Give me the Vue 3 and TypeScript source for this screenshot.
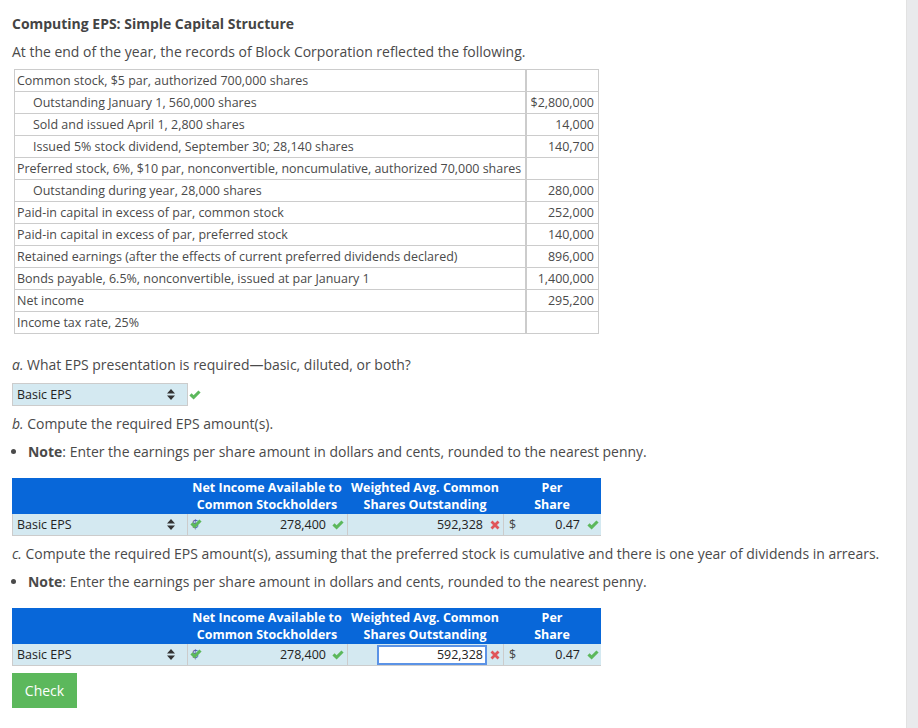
<script setup lang="ts">
interface LedgerRow {
  label: string;
  amount?: string;
  indent?: boolean;
}

const ledger: LedgerRow[] = [
  { label: 'Common stock, $5 par, authorized 700,000 shares' },
  { label: 'Outstanding January 1, 560,000 shares', amount: '$2,800,000', indent: true },
  { label: 'Sold and issued April 1, 2,800 shares', amount: '14,000', indent: true },
  { label: 'Issued 5% stock dividend, September 30; 28,140 shares', amount: '140,700', indent: true },
  { label: 'Preferred stock, 6%, $10 par, nonconvertible, noncumulative, authorized 70,000 shares' },
  { label: 'Outstanding during year, 28,000 shares', amount: '280,000', indent: true },
  { label: 'Paid-in capital in excess of par, common stock', amount: '252,000' },
  { label: 'Paid-in capital in excess of par, preferred stock', amount: '140,000' },
  { label: 'Retained earnings (after the effects of current preferred dividends declared)', amount: '896,000' },
  { label: 'Bonds payable, 6.5%, nonconvertible, issued at par January 1', amount: '1,400,000' },
  { label: 'Net income', amount: '295,200' },
  { label: 'Income tax rate, 25%' },
];

const answerTables = [{ focused: false }, { focused: true }];
</script>

<template>
  <div class="page">
    <main class="content">
      <h1 class="title">Computing EPS: Simple Capital Structure</h1>
      <p class="intro">At the end of the year, the records of Block Corporation reflected the following.</p>

      <table class="ledger">
        <tbody>
          <tr v-for="row in ledger" :key="row.label">
            <td class="ledger-label" :class="{ indent: row.indent }">{{ row.label }}</td>
            <td class="ledger-amount">{{ row.amount }}</td>
          </tr>
        </tbody>
      </table>

      <p class="question q-a"><em>a.</em> What EPS presentation is required—basic, diluted, or both?</p>
      <div class="select-line">
        <div class="select-box">
          <span>Basic EPS</span>
          <svg class="updown" viewBox="0 0 8 11"><path d="M4 0 8 4.4H0ZM4 11 0 6.6h8Z" /></svg>
        </div>
        <svg class="tick" viewBox="0 0 12 10"><path d="M.4 5.4 2.6 3.2 4.6 5.2 9.4.4 11.6 2.6 4.6 9.6Z" /></svg>
      </div>

      <p class="question q-b"><em>b.</em> Compute the required EPS amount(s).</p>
      <ul class="note"><li><strong>Note</strong>: Enter the earnings per share amount in dollars and cents, rounded to the nearest penny.</li></ul>

      <template v-for="(t, i) in answerTables" :key="i">
        <p v-if="i === 1" class="question q-c"><em>c.</em> Compute the required EPS amount(s), assuming that the preferred stock is cumulative and there is one year of dividends in arrears.</p>
        <ul v-if="i === 1" class="note"><li><strong>Note</strong>: Enter the earnings per share amount in dollars and cents, rounded to the nearest penny.</li></ul>

        <div class="answer">
          <div class="head">
            <div></div>
            <div>Net Income Available to<br />Common Stockholders</div>
            <div>Weighted Avg. Common<br />Shares Outstanding</div>
            <div>Per<br />Share</div>
          </div>
          <div class="row">
            <div class="cell cell-select">
              <span>Basic EPS</span>
              <svg class="updown" viewBox="0 0 8 11"><path d="M4 0 8 4.4H0ZM4 11 0 6.6h8Z" /></svg>
            </div>
            <div class="cell cell-income">
              <span class="dollar-tick">
                <span class="dollar-back">$</span>
                <svg class="tick overlay" viewBox="0 0 12 10"><path d="M.4 5.4 2.6 3.2 4.6 5.2 9.4.4 11.6 2.6 4.6 9.6Z" /></svg>
              </span>
              <span class="num">278,400</span>
              <svg class="tick" viewBox="0 0 12 10"><path d="M.4 5.4 2.6 3.2 4.6 5.2 9.4.4 11.6 2.6 4.6 9.6Z" /></svg>
            </div>
            <div class="cell cell-shares">
              <span class="num" :class="{ focused: t.focused }">592,328</span>
              <svg class="cross" viewBox="0 0 10 10"><path d="M1.5 1.5 8.5 8.5M8.5 1.5 1.5 8.5" /></svg>
            </div>
            <div class="cell cell-per">
              <span class="dollar">$</span>
              <span class="num">0.47</span>
              <svg class="tick" viewBox="0 0 12 10"><path d="M.4 5.4 2.6 3.2 4.6 5.2 9.4.4 11.6 2.6 4.6 9.6Z" /></svg>
            </div>
          </div>
        </div>
      </template>

      <button class="check" type="button">Check</button>
    </main>
    <div class="scrollbar"></div>
  </div>
</template>

<style>
html,
body {
  margin: 0;
  background: #fff;
  overflow: hidden;
}
</style>

<style scoped>
.page {
  display: flex;
  width: 918px;
  height: 728px;
  overflow: hidden;
  font-family: "Open Sans", "Liberation Sans", sans-serif;
  color: #4a4a4a;
}

.content {
  flex: 1;
  min-width: 0;
  padding: 14px 0 0 12px;
}

.scrollbar {
  width: 11px;
  border-left: 1px solid #e2e2e2;
  background: #e9eaec;
}

.title {
  margin: 0;
  font-size: 13.98px;
  line-height: 19px;
  font-weight: 700;
  color: #444;
}

.intro {
  margin: 9px 0 7px;
  font-size: 13.98px;
  line-height: 20px;
}

.ledger {
  margin-left: 2px;
  border-collapse: collapse;
  table-layout: fixed;
  width: 585px;
  font-size: 12.48px;
}

.ledger td {
  height: 22px;
  padding: 0 4px 0 3px;
  border: 1px solid #ccc;
  line-height: 17px;
  white-space: nowrap;
  box-sizing: border-box;
}

.ledger-label {
  width: 511px;
  padding-left: 2px !important;
  border-right-width: 2px !important;
}

.ledger-label.indent {
  padding-left: 18px !important;
}

.ledger-amount {
  text-align: right;
}

.question {
  margin: 0;
  font-size: 13.98px;
  line-height: 20px;
}

.q-a {
  margin-top: 21px;
}

.q-b {
  margin-top: 8px;
}

.q-c {
  margin-top: 8px;
}

.select-line {
  display: flex;
  align-items: center;
  gap: 1px;
  margin-top: 8px;
}

.select-box {
  display: flex;
  align-items: center;
  justify-content: space-between;
  box-sizing: border-box;
  width: 176px;
  height: 23px;
  padding: 0 12px 0 4px;
  background: #d4e9f1;
  border: 1px solid #ccc;
  font-size: 12.48px;
  color: #222;
}

.updown {
  width: 8px;
  height: 11px;
  fill: #333;
  flex: none;
}

.tick {
  width: 12px;
  height: 10px;
  fill: #5cb85c;
  flex: none;
}

.cross {
  width: 10px;
  height: 10px;
  fill: none;
  stroke: #e0555a;
  stroke-width: 2.8;
  flex: none;
}

.note {
  margin: 8px 0 0;
  padding: 0 0 0 16px;
  font-size: 13.98px;
  line-height: 20px;
}

.answer {
  width: 589px;
  margin-top: 16px;
}

.head,
.row {
  display: grid;
}

.head {
  grid-template-columns: 175px 160px 156px 98px;
  height: 36px;
  align-items: center;
  background: #0867d9;
  color: #fff;
  font-size: 12.48px;
  font-weight: 700;
  line-height: 17px;
  text-align: center;
}

.row {
  grid-template-columns: 176px 160px 156px 97px;
  height: 22px;
  box-sizing: border-box;
  background: #d4e9f1;
  border-bottom: 1px solid #ccc;
  font-size: 12.48px;
  color: #222;
}

.cell {
  display: flex;
  align-items: center;
  box-sizing: border-box;
  border-right: 1px solid #ccc;
  min-width: 0;
}

.cell:last-child {
  border-right: 0;
}

.cell-select {
  justify-content: space-between;
  padding: 0 12px 0 5px;
  box-shadow: inset 1px 0 0 #ccc;
}

.cell-income {
  gap: 6px;
  padding: 0 3px 0 2px;
}

.num {
  margin-left: auto;
}

.dollar-tick {
  position: relative;
  display: inline-block;
  width: 12px;
  height: 14px;
}

.dollar-back {
  position: absolute;
  left: 2px;
  top: 0;
  font-size: 12px;
  line-height: 14px;
  color: #5b5fa8;
}

.overlay {
  position: absolute;
  left: 0;
  top: 1px;
}

.cell-shares {
  gap: 7px;
  padding-right: 3px;
}

.focused {
  box-sizing: border-box;
  width: 110px;
  height: 20px;
  line-height: 16px;
  padding-right: 2px;
  text-align: right;
  background: #fff;
  border: 2px solid #5b93e6;
  margin-right: -4px;
}

.cell-per {
  gap: 7px;
  padding: 0 2px 0 5px;
}

.dollar {
  color: #444;
}

.check {
  display: block;
  margin-top: 7px;
  width: 65px;
  height: 35px;
  padding: 0;
  border: 0;
  background: #5cb85c;
  color: #fff;
  font-family: inherit;
  font-size: 14px;
}
</style>
